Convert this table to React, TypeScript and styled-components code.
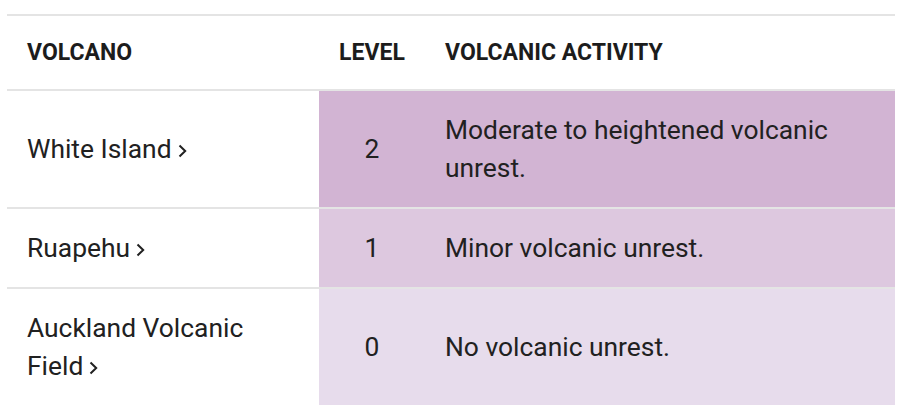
import React from 'react';
import styled, { createGlobalStyle } from 'styled-components';

const GlobalStyle = createGlobalStyle`
  html, body {
    margin: 0;
    padding: 0;
    background: #ffffff;
    font-family: Roboto, "Liberation Sans", Arial, sans-serif;
    color: #212121;
  }
`;

const Page = styled.div`
  padding: 14px 15px 0 7px;
`;

const Table = styled.table`
  width: 888px;
  border-collapse: collapse;
  table-layout: fixed;
  border-top: 2px solid #e4e4e4;
`;

const HeadCell = styled.th<{ $align?: string }>`
  height: 73px;
  padding: 0 20px;
  text-align: ${p => p.$align || 'left'};
  font-size: 23px;
  font-weight: 700;
  color: #1c1c1c;
  vertical-align: middle;
  border-bottom: 2px solid #e4e4e4;
`;

const Row = styled.tr<{ $last?: boolean }>`
  td {
    border-bottom: ${p => (p.$last ? 'none' : '2px solid #e4e4e4')};
  }
`;

const Cell = styled.td<{ $bg?: string; $align?: string }>`
  padding: 20px 20px;
  font-size: 26.4px;
  line-height: 38px;
  vertical-align: middle;
  text-align: ${p => p.$align || 'left'};
  background: ${p => p.$bg || 'transparent'};
  color: #212121;
`;

const LastWord = styled.span`
  white-space: nowrap;
`;

const Chevron = styled.svg`
  display: inline-block;
  width: 9px;
  height: 14px;
  margin-left: 6px;
  vertical-align: 0px;
`;

type Volcano = {
  name: string;
  level: number;
  activity: string;
  bg: string;
};

const volcanoes: Volcano[] = [
  { name: 'White Island', level: 2, activity: 'Moderate to heightened volcanic unrest.', bg: '#d2b4d3' },
  { name: 'Ruapehu', level: 1, activity: 'Minor volcanic unrest.', bg: '#ddc8df' },
  { name: 'Auckland Volcanic Field', level: 0, activity: 'No volcanic unrest.', bg: '#e7dcec' },
];

const Arrow = () => (
  <Chevron viewBox="0 0 9 14" aria-hidden="true">
    <path d="M1.5 1.5 L7.2 7 L1.5 12.5" fill="none" stroke="#212121" strokeWidth="2" />
  </Chevron>
);

// keep the chevron glued to the last word so it wraps along with it
const VolcanoName = ({ name }: { name: string }) => {
  const words = name.split(' ');
  const last = words.pop();
  return (
    <>
      {words.length > 0 && words.join(' ') + ' '}
      <LastWord>
        {last}
        <Arrow />
      </LastWord>
    </>
  );
};

const App: React.FC = () => (
  <Page>
    <GlobalStyle />
    <Table>
      <colgroup>
        <col style={{ width: 312 }} />
        <col style={{ width: 106 }} />
        <col />
      </colgroup>
      <thead>
        <tr>
          <HeadCell>VOLCANO</HeadCell>
          <HeadCell $align="center">LEVEL</HeadCell>
          <HeadCell>VOLCANIC ACTIVITY</HeadCell>
        </tr>
      </thead>
      <tbody>
        {volcanoes.map((v, i) => (
          <Row key={v.name} $last={i === volcanoes.length - 1}>
            <Cell>
              <VolcanoName name={v.name} />
            </Cell>
            <Cell $bg={v.bg} $align="center">{v.level}</Cell>
            <Cell $bg={v.bg}>{v.activity}</Cell>
          </Row>
        ))}
      </tbody>
    </Table>
  </Page>
);

export default App;
